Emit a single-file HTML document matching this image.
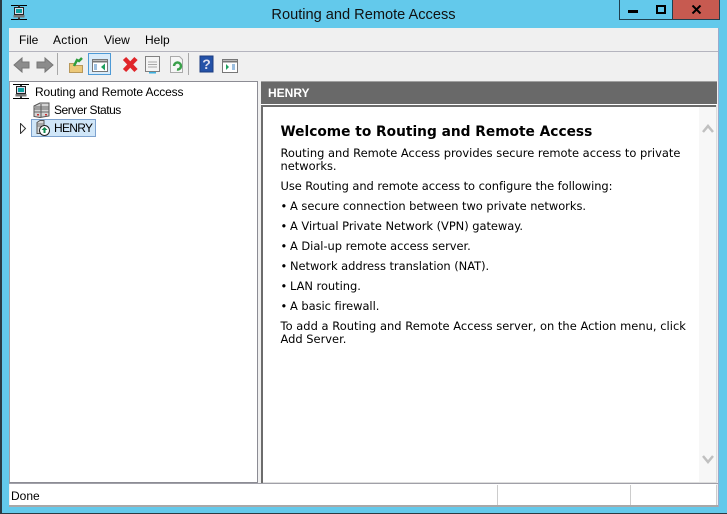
<!DOCTYPE html>
<html><head><meta charset="utf-8"><style>
html,body{margin:0;padding:0;width:727px;height:514px;overflow:hidden;background:#63c9eb}
div,span,svg{position:absolute}
.t{white-space:nowrap;font-family:"Liberation Sans",sans-serif;font-size:12px;color:#000;line-height:14px}
.b{white-space:nowrap;font-family:"DejaVu Sans",sans-serif;font-size:11.45px;color:#000;line-height:14px;left:280.500px}
.c{left:290px;letter-spacing:-.03px}
</style></head><body>
<div style="left:0;top:0;width:2px;height:514px;background:#2b3a42"></div>
<div style="left:0;top:513px;width:727px;height:1px;background:#2b3a42"></div>
<svg style="left:10px;top:4px" width="18" height="18" viewBox="0 0 18 18"><path d="M1 1.500h16M1 15.500h16" stroke="#000" fill="none"/><path d="M9 1.500v3M9 12v3.500" stroke="#333" stroke-width="2" fill="none"/><rect x="4.500" y="3.500" width="9" height="7" fill="#dde" stroke="#222"/><rect x="6" y="5" width="6" height="4" fill="#0fa0a0"/><rect x="3.500" y="11" width="11" height="2.500" fill="#777"/></svg>
<div class="t" style="left:0;width:727px;top:7px;text-align:center;font-size:14.600px;line-height:17px;color:#111">Routing and Remote Access</div>
<div style="left:619px;top:0;width:27px;height:19px;border:1px solid #1f3f4e;border-top:0;background:#63c9eb"></div>
<div style="left:647px;top:0;width:25px;height:19px;border:1px solid #1f3f4e;border-top:0;border-left:0;background:#63c9eb"></div>
<div style="left:673px;top:0;width:46px;height:19px;border-bottom:1px solid #1f3f4e;border-right:1px solid #1f3f4e;background:#c75a50"></div>
<div style="left:628px;top:10px;width:10px;height:3px;background:#000"></div>
<div style="left:656px;top:5px;width:6px;height:5px;border:2px solid #000"></div>
<svg style="left:691px;top:5px" width="11" height="9" viewBox="0 0 11 9"><path d="M1.500 0.500L9.500 8.500M9.500 0.500L1.500 8.500" stroke="#000" stroke-width="2" fill="none"/></svg>

<div style="left:9px;top:28px;width:709px;height:479px;background:#f0f0f0;border-right:1px solid #9ac"></div>
<div style="left:9px;top:51px;width:709px;height:1px;background:#b4b4be"></div>
<div class="t" style="left:19px;top:33px">File</div>
<div class="t" style="left:53px;top:33px;letter-spacing:.3px">Action</div>
<div class="t" style="left:104px;top:33px">View</div>
<div class="t" style="left:145px;top:33px">Help</div>

<svg style="left:0;top:52px" width="260" height="28" viewBox="0 52 260 28">
<path d="M14 65l8-7v4h7v6h-7v4z" fill="#8c8c8c" stroke="#767676"/>
<path d="M53 65l-8-7v4h-8v6h8v4z" fill="#8c8c8c" stroke="#767676"/>
<path d="M57.500 53v22" stroke="#a8a8a8"/>
<path d="M69.500 63.500h5l1 2h7v7h-13z" fill="#ecc878" stroke="#b8985a"/>
<path d="M74 66l3-6 2 1 3-3" stroke="#2f9e3f" stroke-width="2.500" fill="none"/>
<rect x="88.500" y="53.500" width="22" height="21" fill="#d9ebf9" stroke="#4d9ad6" stroke-width="1"/>
<rect x="92.500" y="59.500" width="15" height="12" fill="#fff" stroke="#777"/>
<path d="M93 61.500h14" stroke="#777" stroke-width="2"/>
<path d="M94 65h3M94 67h3M94 69h3" stroke="#3a7fc0"/><path d="M105 63.500v7l-4-3.500z" fill="#1fa060"/>
<path d="M124.500 58.500L136 70.500M136 58.500L124.500 70.500" stroke="#e0262a" stroke-width="4.500" fill="none"/>
<rect x="145.500" y="56.500" width="14" height="15" fill="#f4f4f4" stroke="#808080"/>
<path d="M148 62h9M148 64.500h9M148 67h9" stroke="#a8a8a8"/><rect x="149" y="72" width="7" height="1.500" fill="#3ab0e0"/>
<path d="M170.500 56.500h9l3 3v13h-12z" fill="#f6f6f6" stroke="#aaa"/>
<path d="M174 66a3.500 3.500 0 1 1 3 3.500" stroke="#3aa04a" stroke-width="2.500" fill="none"/>
<path d="M188.500 53v22" stroke="#a8a8a8"/>
<rect x="200" y="56" width="13" height="16" fill="#2452a8" stroke="#1c3c80"/>
<text x="206.500" y="69" font-family="Liberation Sans" font-size="14" font-weight="bold" fill="#dde" text-anchor="middle">?</text>
<rect x="222.500" y="59.500" width="15" height="13" fill="#fff" stroke="#777"/>
<path d="M223 61.500h14" stroke="#777" stroke-width="2"/><path d="M226 64v6l3-3z" fill="#1fa060"/><path d="M232 65h3M232 67h3M232 69h3" stroke="#3a7fc0"/>
</svg>

<div style="left:9px;top:81px;width:247px;height:400px;background:#fff;border:1px solid #8c8c94;border-left-color:#a0a0a8"></div>
<svg style="left:13px;top:84px" width="18" height="16" viewBox="0 0 18 16"><path d="M0 0.500h16M0 14.500h16" stroke="#000" fill="none"/><path d="M8 1v3M8 11v3" stroke="#333" stroke-width="2" fill="none"/><rect x="3.500" y="2.500" width="9" height="7" fill="#dde" stroke="#222"/><rect x="5" y="4" width="6" height="4" fill="#0fa0a0"/><rect x="2.500" y="10" width="11" height="2.500" fill="#777"/></svg>
<div class="t" style="left:35px;top:85px;letter-spacing:-.12px">Routing and Remote Access</div>
<svg style="left:33px;top:102px" width="17" height="16" viewBox="0 0 17 16"><path d="M1 4l6-3 9 0v13l-9 1.500-6-1z" fill="#d4d4d4" stroke="#555"/><path d="M8 2v13" stroke="#555"/><path d="M1 7h15M1 10h15M2 5h14" stroke="#666"/><rect x="4" y="12" width="2" height="1.500" fill="#c33"/><rect x="12" y="12" width="2" height="1.500" fill="#c33"/></svg>
<div class="t" style="left:54px;top:103px;letter-spacing:-.45px">Server Status</div>
<svg style="left:19px;top:123px" width="8" height="11" viewBox="0 0 8 11"><path d="M1.500 0.500L6.500 5.500L1.500 10.500z" fill="#fff" stroke="#333"/></svg>
<div style="left:31px;top:119px;width:63px;height:16px;background:#d0e6f8;border:1px solid #7da2ce"></div>
<svg style="left:35px;top:120px" width="16" height="16" viewBox="0 0 16 16"><path d="M2 2.500l3-2h4v13H2z" fill="#d8d8d8" stroke="#555"/><path d="M2 6h7M2 4h7" stroke="#777"/><circle cx="9.500" cy="10.500" r="5" fill="#fff" stroke="#222"/><path d="M9.500 7l3 3h-2v3h-2v-3h-2z" fill="#128a50"/></svg>
<div class="t" style="left:54px;top:121px;letter-spacing:-.7px">HENRY</div>

<div style="left:261px;top:81px;width:456px;height:1px;background:#a0a0a0"></div>
<div style="left:261px;top:82px;width:456px;height:22px;background:#696969"></div>
<div class="t" style="left:268px;top:86px;color:#fff;font-weight:bold">HENRY</div>
<div style="left:261px;top:104px;width:456px;height:1px;background:#fff"></div>
<div style="left:261px;top:105px;width:455px;height:378px;background:#fff"></div>
<div style="left:261px;top:105px;width:2px;height:378px;background:#6c6c6c"></div>
<div style="left:261px;top:105px;width:455px;height:2px;background:#6c6c6c"></div>
<div style="left:263px;top:482px;width:454px;height:1px;background:#ddd"></div>
<div style="left:716px;top:105px;width:1px;height:378px;background:#ddd"></div>
<div style="left:699px;top:107px;width:17px;height:375px;background:#f7f7f7"></div>
<svg style="left:699px;top:120px" width="17" height="350" viewBox="0 0 17 350"><path d="M4 12l5-6 5 6" stroke="#c0c0c0" stroke-width="2.500" fill="none"/><path d="M4 336l5 6 5-6" stroke="#c0c0c0" stroke-width="2.500" fill="none"/></svg>

<div class="b" style="top:123px;font-size:13.750px;font-weight:bold;line-height:18px">Welcome to Routing and Remote Access</div>
<div class="b" style="top:146px">Routing and Remote Access provides secure remote access to private</div>
<div class="b" style="top:159px">networks.</div>
<div class="b" style="top:179px;letter-spacing:-.05px">Use Routing and remote access to configure the following:</div>
<div class="b" style="top:199px">•</div><div class="b c" style="top:199px">A secure connection between two private networks.</div>
<div class="b" style="top:219px">•</div><div class="b c" style="top:219px">A Virtual Private Network (VPN) gateway.</div>
<div class="b" style="top:239px">•</div><div class="b c" style="top:239px">A Dial-up remote access server.</div>
<div class="b" style="top:259px">•</div><div class="b c" style="top:259px">Network address translation (NAT).</div>
<div class="b" style="top:279px">•</div><div class="b c" style="top:279px">LAN routing.</div>
<div class="b" style="top:299px">•</div><div class="b c" style="top:299px">A basic firewall.</div>
<div class="b" style="top:319px;letter-spacing:.03px">To add a Routing and Remote Access server, on the Action menu, click</div>
<div class="b" style="top:332px">Add Server.</div>

<div style="left:9px;top:483px;width:709px;height:1px;background:#a0a0a8"></div>
<div style="left:10px;top:484px;width:706px;height:21px;background:#fff"></div>
<div style="left:9px;top:505px;width:709px;height:2px;background:#a8a8a8"></div>
<div class="t" style="left:11px;top:489px">Done</div>
<div style="left:497px;top:485px;width:1px;height:20px;background:#ccc"></div>
<div style="left:630px;top:485px;width:1px;height:20px;background:#ccc"></div>
<div style="left:716px;top:485px;width:1px;height:20px;background:#ccc"></div>
</body></html>
